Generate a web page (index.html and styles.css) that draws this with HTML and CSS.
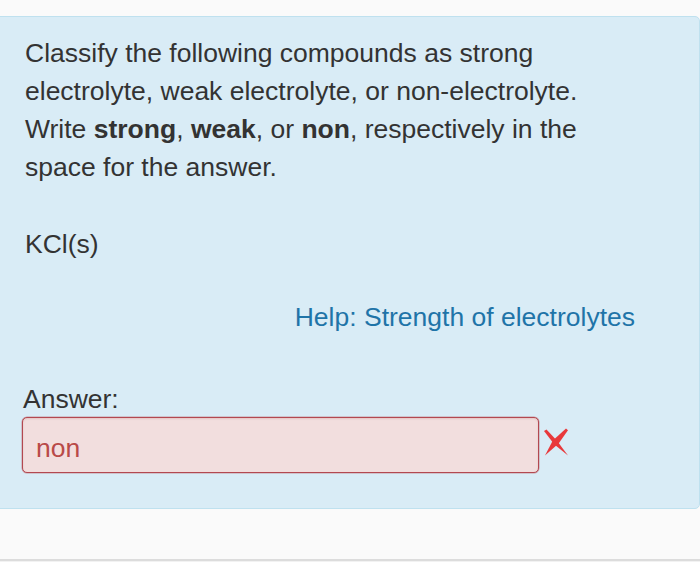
FILE: index.html
```html
<!DOCTYPE html>
<html lang="en">
<head>
<meta charset="utf-8">
<title>Question</title>
<link rel="stylesheet" href="styles.css">
</head>
<body>
<div class="page">
  <section class="panel">
    <p class="question">Classify the following compounds as strong electrolyte, weak electrolyte, or non-electrolyte. Write <b>strong</b>, <b>weak</b>, or <b>non</b>, respectively in the space for the answer.</p>
    <p class="compound">KCl(s)</p>
    <p class="help"><a href="#" class="help-link">Help: Strength of electrolytes</a></p>
    <label class="answer-label" for="ans">Answer:</label>
    <div class="answer-row">
      <input id="ans" class="answer-input" type="text" value="non" readonly>
      <svg class="wrong" width="26" height="28" viewBox="0 0 26 28" aria-label="incorrect">
        <polygon points="1,3 3.5,1.5 13.8,12.6 25,27.5 11.4,16.6" fill="#e8393b"/>
        <polygon points="23,0.5 25,2.2 15.6,15.6 2,27.5 9.8,12.4" fill="#e8393b"/>
      </svg>
    </div>
  </section>
  <div class="below"></div>
  <div class="footer"></div>
</div>
</body>
</html>
```
FILE: styles.css
```css
html, body {
  margin: 0;
  padding: 0;
  background: #fafafa;
}

body {
  font-family: "Liberation Sans", Arial, Helvetica, sans-serif;
  font-size: 26.5px;
  color: #333333;
  overflow: hidden;
}

.page {
  padding-top: 16px;
}

.panel {
  margin-left: -6px;
  width: 706px;
  box-sizing: border-box;
  background: #d9ecf6;
  border: 1px solid #bfe1ef;
  border-radius: 5px;
  padding: 17px 25px 35px 30px;
}

.question {
  margin: 0;
  width: 590px;
  line-height: 38px;
}

.question b {
  font-weight: bold;
}

.compound {
  margin: 39px 0 0 0;
  line-height: 38px;
}

.help {
  margin: 35px 0 0 0;
  line-height: 38px;
  text-align: right;
  padding-right: 39px;
}

.help-link {
  color: #1f74a8;
  text-decoration: none;
}

.answer-label {
  display: block;
  margin: 44px 0 0 -2px;
  line-height: 38px;
}

.answer-row {
  display: flex;
  align-items: flex-start;
  margin-left: -3px;
  margin-top: -1px;
}

.answer-input {
  width: 517px;
  height: 56px;
  box-sizing: border-box;
  margin: 0;
  padding: 6px 13px 0 13px;
  border: 1px solid #b34850;
  border-radius: 5px;
  background: #f2dede;
  color: #b94a48;
  font-family: "Liberation Sans", Arial, Helvetica, sans-serif;
  font-size: 26.5px;
  outline: none;
  box-shadow: inset 0 1px 2px rgba(120, 0, 0, 0.12), 0 0 0 0.5px rgba(179, 72, 80, 0.5);
}

.wrong {
  margin-left: 4px;
  margin-top: 11px;
  flex: none;
}

.below {
  height: 50px;
  background: #fafafa;
}

.footer {
  height: 20px;
  border-top: 2px solid #dcdcdc;
  background: #f2f2f2;
}
```
